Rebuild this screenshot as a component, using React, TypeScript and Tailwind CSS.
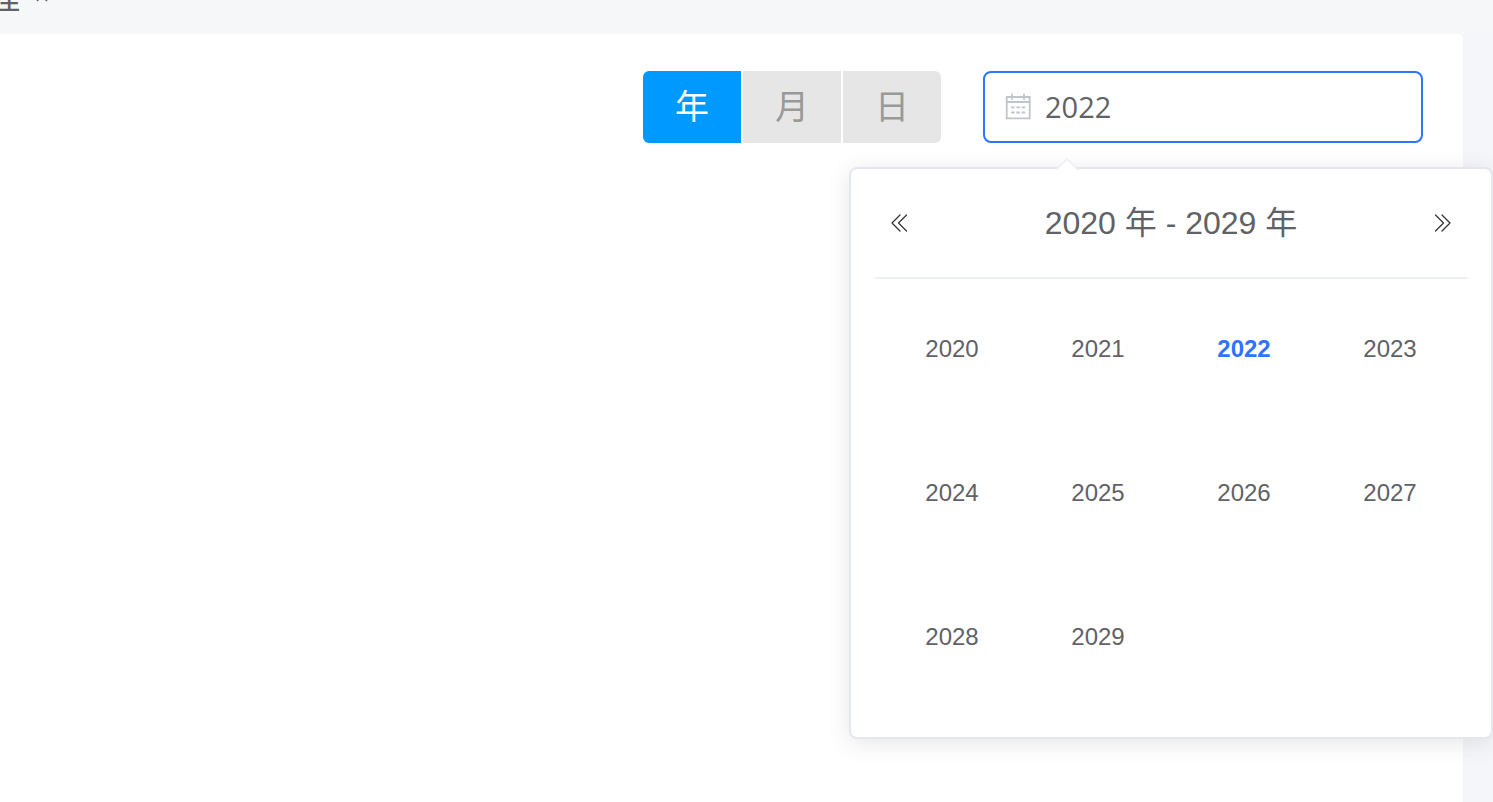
import React, { useState } from "react";

const years = [
  [2020, 2021, 2022, 2023],
  [2024, 2025, 2026, 2027],
  [2028, 2029],
];

const tabs = [
  { label: "年", shape: "rounded-l-md" },
  { label: "月", shape: "" },
  { label: "日", shape: "rounded-r-md" },
];

function CalendarIcon() {
  return (
    <svg
      className="w-7 h-7 shrink-0"
      viewBox="0 0 28 28"
      fill="none"
      stroke="#c0c4cc"
      strokeWidth="1.8"
    >
      <path d="M2.700 4h23v21.300h-23zM2.700 9h23" />
      <path d="M8 1.500v4.500M20 1.500v4.500" strokeLinecap="round" />
      <path d="M7 14.400h3.600M12.300 14.400h3.600M17.600 14.400h3.600M7 19.500h3.600M12.300 19.500h3.600M17.600 19.500h3.600" />
    </svg>
  );
}

function DoubleArrow({ d }: { d: string }) {
  return (
    <svg
      className="w-6 h-6"
      viewBox="0 0 24 24"
      fill="none"
      stroke="#303133"
      strokeWidth="1.2"
      strokeLinecap="round"
      strokeLinejoin="round"
    >
      <path d={d} />
    </svg>
  );
}

function YearPanel({
  value,
  onPick,
}: {
  value: string;
  onPick: (year: string) => void;
}) {
  return (
    <div className="absolute -left-[134px] top-24 w-[644px] rounded-lg border-2 border-[#e4e7ed] bg-white px-6 pt-6 pb-7 shadow-[0_4px_24px_rgba(0,0,0,0.1)] font-['Liberation_Sans','Noto_Sans_CJK_SC',sans-serif] text-[#606266]">
      {/* arrow */}
      <svg
        className="absolute left-[204px] -top-[11px] w-6 h-3"
        viewBox="0 0 24 12"
      >
        <path d="M0 12L12 0L24 12z" fill="#ebeef5" />
        <path d="M2 12L12 2L22 12z" fill="#fff" />
      </svg>
      {/* header */}
      <div className="flex items-center justify-between border-b-2 border-[#ebeef5] px-3 pb-6">
        <button type="button" aria-label="前十年">
          <DoubleArrow d="M13 4L5 12L13 20M19.500 4L11.500 12L19.500 20" />
        </button>
        <span className="text-[32px] leading-[60px]">2020 年 - 2029 年</span>
        <button type="button" aria-label="后十年">
          <DoubleArrow d="M4.500 4L12.500 12L4.500 20M11 4L19 12L11 20" />
        </button>
      </div>
      {/* years */}
      <div className="px-1">
        <table className="-mt-0.5 w-full table-fixed text-2xl">
          <tbody>
            {years.map((row) => (
              <tr key={row[0]} className="h-36">
                {row.map((year) => (
                  <td key={year} className="p-0 text-center">
                    <button
                      type="button"
                      onClick={() => onPick(String(year))}
                      className={
                        String(year) === value
                          ? "font-bold text-[#2f74ff]"
                          : "hover:text-[#2f74ff]"
                      }
                    >
                      {year}
                    </button>
                  </td>
                ))}
              </tr>
            ))}
          </tbody>
        </table>
      </div>
    </div>
  );
}

export default function App() {
  const [active, setActive] = useState("年");
  const [value, setValue] = useState("2022");

  return (
    <div className="flex min-h-screen flex-col overflow-hidden bg-[#f5f6fa] font-['Noto_Sans_CJK_SC',sans-serif]">
      {/* page tab */}
      <div className="flex h-[34px] items-start gap-4 overflow-hidden bg-[#f6f7f9] text-[#606266]">
        <span className="-ml-3 -mt-[30px] text-[32px] leading-[50px]">理</span>
        <svg
          className="-mt-2.5 w-3 h-3"
          viewBox="0 0 12 12"
          fill="none"
          stroke="#606266"
          strokeWidth="1.5"
        >
          <path d="M1 1l10 10M11 1L1 11" />
        </svg>
      </div>
      <div className="mr-[30px] flex flex-1 items-start justify-end rounded-tr-md bg-white pr-10 pt-[37px]">
        <div className="mr-[42px] flex gap-0.5">
          {tabs.map((tab) => (
            <button
              key={tab.label}
              type="button"
              onClick={() => setActive(tab.label)}
              className={`h-[72px] w-[98px] pb-1 text-[34px] leading-[68px] ${tab.shape} ${
                active === tab.label
                  ? "bg-[#0099ff] text-white"
                  : "bg-[#e6e6e6] text-[#999999]"
              }`}
            >
              {tab.label}
            </button>
          ))}
        </div>
        <div className="relative w-[440px]">
          <label className="flex h-[72px] items-center gap-[13px] rounded-lg border-2 border-[#2f74ff] bg-white pl-[19px]">
            <CalendarIcon />
            <input
              type="text"
              aria-label="选择年"
              value={value}
              onChange={(e) => setValue(e.target.value)}
              className="min-w-0 flex-1 bg-transparent font-['Open_Sans',sans-serif] text-[29px] text-[#606266] outline-none"
            />
          </label>
          <YearPanel value={value} onPick={setValue} />
        </div>
      </div>
    </div>
  );
}
